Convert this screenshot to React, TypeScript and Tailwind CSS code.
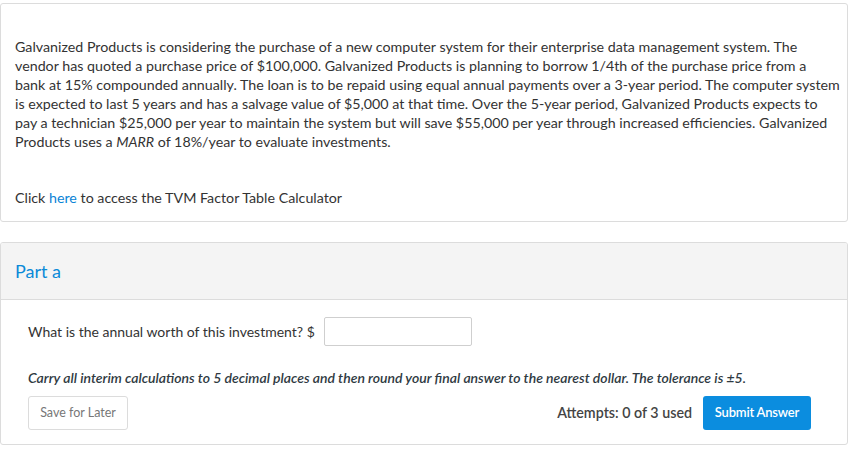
import React from "react";

export default function App() {
  return (
    <div className="w-[849px] h-[449px] bg-white overflow-hidden" style={{ fontFamily: "Lato, 'Noto Sans', sans-serif" }}>
      <div className="pt-[3px] pr-[1px]">
        <div className="border border-[#dcdcdc] rounded-[3px] pl-[14px] pr-[4px] pt-[33px] pb-[14px] text-[14.25px] leading-[19px] text-[#333]">
          <p>
            Galvanized Products is considering the purchase of a new computer system for their enterprise data management system. The<br />
            vendor has quoted a purchase price of $100,000. Galvanized Products is planning to borrow 1/4th of the purchase price from a<br />
            bank at 15% compounded annually. The loan is to be repaid using equal annual payments over a 3-year period. The computer system<br />
            is expected to last 5 years and has a salvage value of $5,000 at that time. Over the 5-year period, Galvanized Products expects to<br />
            pay a technician $25,000 per year to maintain the system but will save $55,000 per year through increased efficiencies. Galvanized<br />
            Products uses a <i>MARR</i> of 18%/year to evaluate investments.
          </p>
          <p className="mt-[37px]">
            Click <span className="text-[#0a84d6]">here</span> to access the TVM Factor Table Calculator
          </p>
        </div>
        <div className="mt-[20px] border border-[#dcdcdc] rounded-[3px] overflow-hidden">
          <div className="bg-[#f4f4f4] border-b border-[#dcdcdc] h-[57px] flex items-center px-[14px]">
            <span className="text-[18px] text-[#0a8ad8]">Part a</span>
          </div>
          <div className="pl-[27px] pr-[36px] pt-[17px] pb-[14px] text-[14px] text-[#333]">
            <div className="flex items-center gap-[9px]">
              <span>What is the annual worth of this investment? $</span>
              <div className="w-[148px] h-[29px] border border-[#cfcfcf] rounded-[2px] bg-white"></div>
            </div>
            <p className="mt-[22px] italic font-semibold leading-[19px] text-[#2f3a42]">
              Carry all interim calculations to 5 decimal places and then round your final answer to the nearest dollar. The tolerance is ±5.
            </p>
            <div className="mt-[9px] flex items-center justify-between">
              <div className="w-[100px] h-[34px] border border-[#dcdcdc] rounded-[3px] flex items-center justify-center text-[12.5px] text-[#777]">
                Save for Later
              </div>
              <div className="flex items-center gap-[11px]">
                <span className="text-[14.25px] font-semibold text-[#444]">Attempts: 0 of 3 used</span>
                <div className="w-[108px] h-[34px] rounded-[3px] bg-[#0b8ddf] flex items-center justify-center text-[13px] font-semibold text-white tracking-[-0.2px]">
                  Submit Answer
                </div>
              </div>
            </div>
          </div>
        </div>
      </div>
    </div>
  );
}
